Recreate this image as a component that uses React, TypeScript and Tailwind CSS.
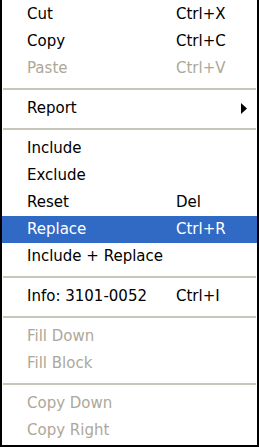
import React from "react";

type Item =
  | { kind: "sep" }
  | { kind: "item"; label: string; shortcut?: string; disabled?: boolean; active?: boolean; submenu?: boolean };

const items: Item[] = [
  { kind: "item", label: "Cut", shortcut: "Ctrl+X" },
  { kind: "item", label: "Copy", shortcut: "Ctrl+C" },
  { kind: "item", label: "Paste", shortcut: "Ctrl+V", disabled: true },
  { kind: "sep" },
  { kind: "item", label: "Report", submenu: true },
  { kind: "sep" },
  { kind: "item", label: "Include" },
  { kind: "item", label: "Exclude" },
  { kind: "item", label: "Reset", shortcut: "Del" },
  { kind: "item", label: "Replace", shortcut: "Ctrl+R", active: true },
  { kind: "item", label: "Include + Replace" },
  { kind: "sep" },
  { kind: "item", label: "Info: 3101-0052", shortcut: "Ctrl+I" },
  { kind: "sep" },
  { kind: "item", label: "Fill Down", disabled: true },
  { kind: "item", label: "Fill Block", disabled: true },
  { kind: "sep" },
  { kind: "item", label: "Copy Down", disabled: true },
  { kind: "item", label: "Copy Right", disabled: true },
];

export default function App() {
  return (
    <div className="w-[259px] h-[447px] bg-white border-l-2 border-r-2 border-b-2 border-black pt-[1px] font-['DejaVu_Sans',sans-serif] text-[15px] leading-none">
      {items.map((it, i) => {
        if (it.kind === "sep") {
          return (
            <div key={i} className="h-[13px] flex items-center px-[1px]">
              <div className="h-[2px] w-full bg-[#c8c5bb]" />
            </div>
          );
        }
        const color = it.active ? "text-white bg-[#316ac5]" : it.disabled ? "text-[#aca899]" : "text-black";
        return (
          <div key={i} className={`h-[27px] flex items-center relative ${color}`}>
            <span className="pl-[25px] w-[174px] shrink-0 whitespace-nowrap">{it.label}</span>
            {it.shortcut && <span className="whitespace-nowrap">{it.shortcut}</span>}
            {it.submenu && (
              <svg className="absolute left-[239px] top-[8px]" width="6" height="11" viewBox="0 0 6 11">
                <path d="M0 0 L6 5.5 L0 11 Z" fill="#000" />
              </svg>
            )}
          </div>
        );
      })}
    </div>
  );
}
